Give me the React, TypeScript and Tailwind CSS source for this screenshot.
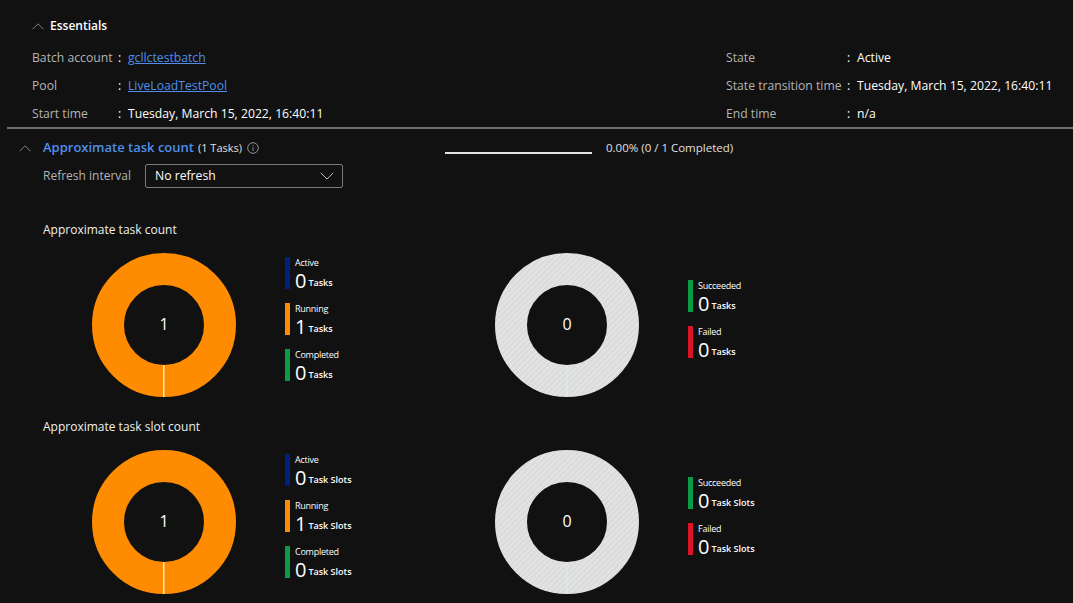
import React from "react";

const FONT = "font-['Open_Sans','Liberation_Sans',sans-serif]";

type Item = { label: string; value: number; color: string };

const ESSENTIALS_LEFT = [
  { label: "Batch account", value: "gcllctestbatch", link: true },
  { label: "Pool", value: "LiveLoadTestPool", link: true },
  { label: "Start time", value: "Tuesday, March 15, 2022, 16:40:11" },
];

const ESSENTIALS_RIGHT = [
  { label: "State", value: "Active" },
  { label: "State transition time", value: "Tuesday, March 15, 2022, 16:40:11" },
  { label: "End time", value: "n/a" },
];

const STATUS: Item[] = [
  { label: "Active", value: 0, color: "bg-[#002080]" },
  { label: "Running", value: 1, color: "bg-[#ff8c00]" },
  { label: "Completed", value: 0, color: "bg-[#0b9a46]" },
];

const RESULT: Item[] = [
  { label: "Succeeded", value: 0, color: "bg-[#0b9a46]" },
  { label: "Failed", value: 0, color: "bg-[#dc1428]" },
];

function Chevron({ className }: { className: string }) {
  return (
    <svg viewBox="0 0 12 7" className={className} fill="none" stroke="currentColor" strokeWidth="0.8">
      <path d="M0.5 6.3 L6 0.8 L11.5 6.3" />
    </svg>
  );
}

function Donut({ value, id }: { value: number; id: string }) {
  const busy = value > 0;
  return (
    <svg viewBox="0 0 144 144" className="w-[144px] h-[144px] shrink-0">
      <defs>
        <pattern id={id} width="4" height="4" patternUnits="userSpaceOnUse" patternTransform="rotate(-45)">
          <rect width="4" height="4" fill="#e2e2e2" />
          <rect width="4" height="1" fill="#d6d6d6" />
        </pattern>
      </defs>
      <circle cx="72" cy="72" r="56" fill="none" strokeWidth="32" stroke={busy ? "#ff8c00" : `url(#${id})`} />
      <rect x="71" y="112" width="1.5" height="32" fill={busy ? "#fde9c8" : "#dcebe4"} />
      <text x="72" y="77" textAnchor="middle" fontSize="16" fontWeight="500" fill="#ffffff">
        {value}
      </text>
    </svg>
  );
}

function Legend({ items, unit }: { items: Item[]; unit: string }) {
  return (
    <div className="flex flex-col gap-[14px] mb-[12px]">
      {items.map((it) => (
        <div key={it.label} className="flex h-[32px] gap-[5px]">
          <div className={`w-[5px] h-[32px] ${it.color}`} />
          <div className="flex flex-col text-white">
            <span className="text-[9px] leading-[11px] tracking-[-0.25px] mt-[-0.5px]">{it.label}</span>
            <div className="flex items-baseline gap-[2px] leading-[20px] h-[20px] mt-[3px]">
              <span className="text-[20px] leading-[20px] font-medium">{it.value}</span>
              <span className="text-[9px] font-semibold -translate-y-[2px]">{unit}</span>
            </div>
          </div>
        </div>
      ))}
    </div>
  );
}

function ChartGroup({ title, unit, prefix }: { title: string; unit: string; prefix: string }) {
  return (
    <div className="flex flex-col">
      <div className="pl-[43px] text-[12px] leading-[16px] text-[#f0f0f0]">{title}</div>
      <div className="flex pl-[92px] mt-[15px]">
        <div className="w-[403px] flex items-center gap-[49px]">
          <Donut value={1} id={`${prefix}-a`} />
          <Legend items={STATUS} unit={unit} />
        </div>
        <div className="flex items-center gap-[49px]">
          <Donut value={0} id={`${prefix}-b`} />
          <Legend items={RESULT} unit={unit} />
        </div>
      </div>
    </div>
  );
}

function EssentialRow({ label, value, link, labelWidth }: { label: string; value: string; link?: boolean; labelWidth: string }) {
  return (
    <div className="flex h-[28px] items-center text-[12.2px] whitespace-nowrap">
      <span className={`${labelWidth} text-[#b4b4b4]`}>{label}</span>
      <span className="w-[10px] text-white">:</span>
      {link ? <a className="text-[#4f8fea] underline">{value}</a> : <span className="text-white">{value}</span>}
    </div>
  );
}

export default function App() {
  return (
    <div className={`${FONT} w-[1073px] h-[603px] overflow-hidden bg-[#111111]`}>
      <div className="flex items-center h-[16px] mt-[18px] pl-[32px] gap-[6px]">
        <Chevron className="w-[12px] h-[7px] text-[#a0a0a0]" />
        <span className="text-[12px] font-semibold text-white">Essentials</span>
      </div>
      <div className="flex mt-[10px] h-[83px] pl-[32px]">
        <div className="w-[694px]">
          {ESSENTIALS_LEFT.map((r) => (
            <EssentialRow key={r.label} {...r} labelWidth="w-[86px]" />
          ))}
        </div>
        <div>
          {ESSENTIALS_RIGHT.map((r) => (
            <EssentialRow key={r.label} {...r} labelWidth="w-[121px]" />
          ))}
        </div>
      </div>
      <div className="ml-[7px] h-[2px] bg-[#6e6e6e]" />

      <div className="flex items-center h-[20px] mt-[9px]">
        <div className="w-[445px] flex items-center">
          <Chevron className="ml-[19px] w-[12px] h-[7px] text-[#a0a0a0]" />
          <span className="ml-[12px] text-[13px] font-semibold text-[#4f8fea]">Approximate task count</span>
          <span className="ml-[4px] text-[11px] text-[#e0e0e0]">(1 Tasks)</span>
          <svg viewBox="0 0 12 12" className="ml-[5px] w-[12px] h-[12px] text-[#b0b0b0]" fill="none" stroke="currentColor" strokeWidth="0.8">
            <circle cx="6" cy="6" r="5.3" />
            <path d="M6 5.2 V9 M6 3 V4" />
          </svg>
        </div>
        <div className="w-[147px] h-[2px] mt-[10px] bg-[#e2e2e2]" />
        <span className="ml-[14px] text-[11.5px] text-[#e0e0e0]">0.00% (0 / 1 Completed)</span>
      </div>

      <div className="flex items-center h-[24px] mt-[6px] pl-[43px]">
        <span className="w-[102px] text-[12px] text-[#b4b4b4]">Refresh interval</span>
        <div className="w-[198px] h-[24px] border border-[#7a7a7a] rounded-[2px] flex items-center justify-between pl-[9px] pr-[8px]">
          <span className="text-[12.2px] text-white">No refresh</span>
          <Chevron className="w-[14px] h-[8px] rotate-180 text-[#d0d0d0]" />
        </div>
      </div>

      <div className="mt-[34px]">
        <ChartGroup title="Approximate task count" unit="Tasks" prefix="tasks" />
      </div>
      <div className="mt-[22px]">
        <ChartGroup title="Approximate task slot count" unit="Task Slots" prefix="slots" />
      </div>
    </div>
  );
}
